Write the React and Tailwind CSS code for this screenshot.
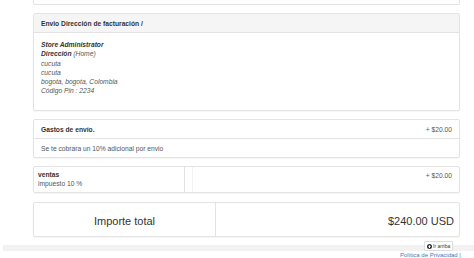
import React from 'react';

const Panel = ({ className, children }) => (
  <div className={`border border-[#e3e3e3] rounded-[2px] bg-white shadow-[0_1px_1px_rgba(0,0,0,0.04)] ${className || ''}`}>
    {children}
  </div>
);

export default function App() {
  return (
    <div className="w-[474px] h-[258px] overflow-hidden bg-white text-[#333] font-['Liberation_Sans',Arial,sans-serif] text-[6.7px] leading-[9px] relative">
      <div className="ml-[33px] w-[427px]">
        <div className="h-[6px] -mt-px border border-t-0 border-[#e3e3e3] rounded-b-[2px]" />

        <Panel className="mt-[8px] h-[98px]">
          <div className="h-[19px] bg-[#f5f5f5] border-b border-[#e3e3e3] px-[7px] flex items-center font-bold">
            Envio Dirección de facturación /
          </div>
          <div className="px-[7px] pt-[7px] italic text-[#555] leading-[9.3px]">
            <div className="font-bold text-[#333]">Store Administrator</div>
            <div><span className="font-bold text-[#333]">Dirección</span> (Home)</div>
            <div>cucuta</div>
            <div>cucuta</div>
            <div>bogota, bogota, Colombia</div>
            <div>Código Pin : 2234</div>
          </div>
        </Panel>

        <Panel className="mt-[8px] h-[39px]">
          <div className="h-[19px] border-b border-[#e3e3e3] px-[7px] flex items-center justify-between pt-px">
            <span className="font-bold">Gastos de envío.</span>
            <span className="text-[#555]">+ $20.00</span>
          </div>
          <div className="h-[18px] px-[7px] flex items-center text-[#555]">
            Se te cobrara un 10% adicional por envio
          </div>
        </Panel>

        <Panel className="mt-[8px] h-[27px] flex">
          <div className="w-[151px] border-r border-[#e3e3e3] px-[4px] pt-[3px]">
            <div className="font-bold">ventas</div>
            <div className="text-[#555]">impuesto 10 %</div>
          </div>
          <div className="flex-1 ml-[7px] border-l border-[#f3f3f3] px-[7px] pt-[4px] text-right text-[#555]">
            + $20.00
          </div>
        </Panel>

        <Panel className="mt-[9px] h-[35px] flex">
          <div className="w-[182px] border-r border-[#e3e3e3] flex items-center justify-center pt-[3px] text-[11px] leading-[13px] text-[#333]">
            Importe total
          </div>
          <div className="flex-1 flex items-center justify-end pr-[5px] pt-[3px] text-[11px] leading-[13px] text-[#333]">
            $240.00 USD
          </div>
        </Panel>
      </div>

      <div className="absolute left-[3px] right-0 top-[245px] h-[6px] bg-[#f2f2f2]" />
      <div className="absolute left-[424px] top-[241px] h-[10px] px-[2px] border border-[#ddd] rounded-[1px] bg-white flex items-center gap-[1px] text-[5px] leading-[6px] text-[#333]">
        <svg width="5" height="5" viewBox="0 0 10 10"><circle cx="5" cy="5" r="5" fill="#333" /><path d="M5 2 L8 5.5 H6 V8 H4 V5.5 H2 Z" fill="#fff" /></svg>
        Ir arriba
      </div>
      <div className="absolute left-[400px] top-[251px] text-[6px] leading-[8px] text-[#3a7cc4]">
        Política de Privacidad |
      </div>
    </div>
  );
}
